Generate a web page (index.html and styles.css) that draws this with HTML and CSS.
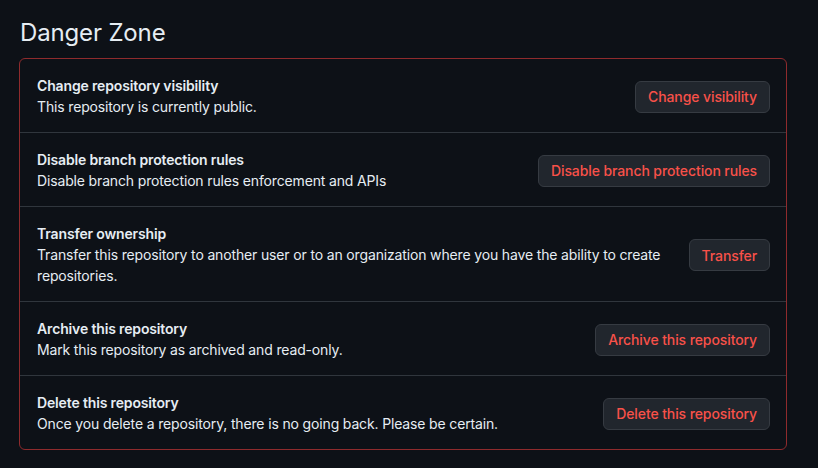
FILE: index.html
```html
<!DOCTYPE html>
<html lang="en">

<head>
    <meta charset="UTF-8">
    <meta name="viewport" content="width=device-width, initial-scale=1.0">
    <title>Danger Zone</title>
    <link rel="stylesheet" href="styles.css">
</head>

<body>
    <div class="settings">
        <h2 class="subhead">Danger Zone</h2>

        <div class="box box-danger">
            <!-- Visibility -->
            <div class="box-row">
                <div class="row-text">
                    <strong>Change repository visibility</strong>
                    <p>This repository is currently public.</p>
                </div>
                <button class="btn btn-danger">Change visibility</button>
            </div>

            <!-- Branch protection -->
            <div class="box-row">
                <div class="row-text">
                    <strong>Disable branch protection rules</strong>
                    <p>Disable branch protection rules enforcement and APIs</p>
                </div>
                <button class="btn btn-danger">Disable branch protection rules</button>
            </div>

            <!-- Transfer -->
            <div class="box-row">
                <div class="row-text">
                    <strong>Transfer ownership</strong>
                    <p>Transfer this repository to another user or to an organization where you have the ability to create repositories.</p>
                </div>
                <button class="btn btn-danger">Transfer</button>
            </div>

            <!-- Archive -->
            <div class="box-row">
                <div class="row-text">
                    <strong>Archive this repository</strong>
                    <p>Mark this repository as archived and read-only.</p>
                </div>
                <button class="btn btn-danger">Archive this repository</button>
            </div>

            <!-- Delete -->
            <div class="box-row">
                <div class="row-text">
                    <strong>Delete this repository</strong>
                    <p>Once you delete a repository, there is no going back. Please be certain.</p>
                </div>
                <button class="btn btn-danger">Delete this repository</button>
            </div>
        </div>
    </div>
</body>

</html>
```

FILE: styles.css
```css
/* Basic Reset */
* {
    box-sizing: border-box;
    margin: 0;
    padding: 0;
}

body {
    background-color: #0d1117;
    color: #e6edf3;
    font-family: Inter, "Noto Sans", sans-serif;
    font-size: 14px;
    line-height: 1.5;
    letter-spacing: -0.15px;
}

.settings {
    padding: 15px 31px 0 19px;
}

/* Section title */
.subhead {
    font-size: 24px;
    font-weight: 400;
    line-height: 1.5;
    padding-left: 1px;
    margin-bottom: 7px;
}

/* Bordered list */
.box {
    border: 1px solid #30363d;
    border-radius: 6px;
}

.box-danger {
    border-color: #8f2b2d;
}

.box-row {
    display: flex;
    align-items: center;
    padding: 17px 16px 15px 17px;
    border-top: 1px solid #30363d;
}

.box-row:first-child {
    border-top: none;
}

.row-text {
    flex: 1;
    margin-right: 16px;
}

.row-text strong {
    display: block;
    font-weight: 600;
    line-height: 20px;
}

/* Buttons */
.btn {
    flex-shrink: 0;
    height: 32px;
    padding: 0 12px;
    font-family: inherit;
    font-size: 14px;
    font-weight: 500;
    letter-spacing: -0.1px;
    background: #21262d;
    border: 1px solid #363b42;
    border-radius: 6px;
    cursor: pointer;
}

.btn-danger {
    color: #f85149;
}

.btn-danger:hover {
    background: #da3633;
    color: #ffffff;
}
```
